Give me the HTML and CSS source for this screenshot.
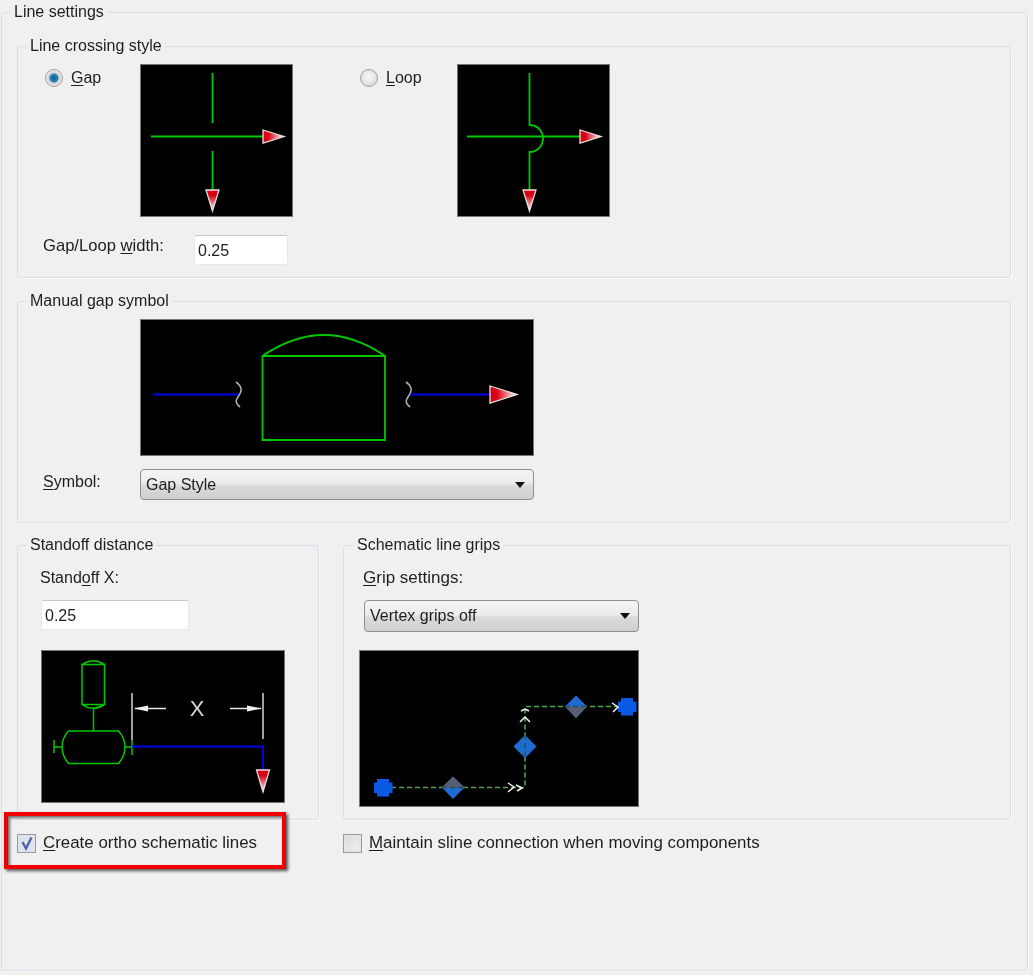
FILE: index.html
```html
<!DOCTYPE html>
<html lang="en">
<head>
    <meta charset="UTF-8">
    <title>Line settings</title>
    <link rel="stylesheet" href="styles.css">
</head>
<body>
    <fieldset class="group outer">
        <legend>Line settings</legend>

        <fieldset class="group crossing">
            <legend>Line crossing style</legend>
            <div class="crossing-row">
                <div class="option option-gap">
                    <span class="radio radio-on"></span>
                    <span class="option-label"><u>G</u>ap</span>
                </div>
                <svg class="preview" width="153" height="153" viewBox="0 0 153 153">
                    <defs>
                        <linearGradient id="headRight" x1="0" y1="0" x2="1" y2="0">
                            <stop offset="0.25" stop-color="#d80012"/>
                            <stop offset="1" stop-color="#ffffff"/>
                        </linearGradient>
                        <linearGradient id="headDown" x1="0" y1="0" x2="0" y2="1">
                            <stop offset="0.25" stop-color="#d80012"/>
                            <stop offset="1" stop-color="#ffffff"/>
                        </linearGradient>
                    </defs>
                    <path class="pipe" d="M72.5 9V59M72.5 87V126M11 72.5H123"/>
                    <polygon class="head-r" points="123,66 144,72.5 123,79"/>
                    <polygon class="head-d" points="66,126 79,126 72.5,147"/>
                </svg>
                <div class="option option-loop">
                    <span class="radio"></span>
                    <span class="option-label"><u>L</u>oop</span>
                </div>
                <svg class="preview" width="153" height="153" viewBox="0 0 153 153">
                    <path class="pipe" d="M72.5 9V61A13.5 13.5 0 0 1 72.5 88V126M10 72.5H123"/>
                    <polygon class="head-r" points="123,66 144,72.5 123,79"/>
                    <polygon class="head-d" points="66,126 79,126 72.5,147"/>
                </svg>
            </div>
            <div class="width-row">
                <label class="width-label">Gap/Loop <u>w</u>idth:</label>
                <input class="field width-field" type="text" value="0.25">
            </div>
        </fieldset>

        <fieldset class="group manual">
            <legend>Manual gap symbol</legend>
            <svg class="preview" width="394" height="137" viewBox="0 0 394 137">
                <path class="pipe" d="M122.5 37H245V121H122.5ZM122.5 37Q184 -5 245 37"/>
                <path class="blue" d="M13 75.5H99M270 75.5H350"/>
                <path class="squiggle" d="M96 63C103 68 102 73 98 78C95 82 96 85 100 88M266 63C273 68 272 73 268 78C265 82 266 85 270 88"/>
                <polygon class="head-r" points="350,67 377,75.5 350,84"/>
            </svg>
            <div class="symbol-row">
                <label class="symbol-label"><u>S</u>ymbol:</label>
                <div class="combo symbol-combo">Gap Style<span class="combo-arrow"></span></div>
            </div>
        </fieldset>

        <div class="bottom-groups">
            <fieldset class="group standoff">
                <legend>Standoff distance</legend>
                <label class="stack-label">Stand<u>o</u>ff X:</label>
                <input class="field standoff-field" type="text" value="0.25">
                <svg class="preview" width="244" height="153" viewBox="0 0 244 153">
                    <path class="thin" d="M41 14.500H63.500V54.500H41ZM41 14.500Q52 7 63.500 14.500M41 54.500Q52 62 63.500 54.500M52.500 58V81"/>
                    <path class="thin" d="M27.500 81H77.500Q84 88 84 97Q84 106 77.500 113.500H27.500Q21 106 21 97Q21 88 27.500 81ZM21 97H13M13 90V103M84 97H91M91 90V105"/>
                    <path class="dim" d="M91 43V90M222 43V89"/>
                    <path class="dim-thin" d="M94 58.500H125M189 58.500H220"/>
                    <polygon class="dim-head" points="93,58.500 107,55.500 107,61.500"/>
                    <polygon class="dim-head" points="220,58.500 206,55.500 206,61.500"/>
                    <text class="dim-text" x="156" y="66">X</text>
                    <path class="blue" d="M91 96.500H222V120"/>
                    <polygon class="head-d" points="215.500,120 228.500,120 222,142"/>
                </svg>
            </fieldset>
            <fieldset class="group grips">
                <legend>Schematic line grips</legend>
                <label class="stack-label"><u>G</u>rip settings:</label>
                <div class="combo grip-combo">Vertex grips off<span class="combo-arrow"></span></div>
                <svg class="preview" width="280" height="157" viewBox="0 0 280 157">
                    <path class="dashes" d="M24 137.500H166V56.500H268"/>
                    <path class="grip-plus" d="M18 129H30V132.500H33.500V143H30V146.500H18V143H15V132.500H18Z"/>
                    <path class="grip-plus" d="M262 48H274V51.500H277.500V62H274V65.500H262V62H259V51.500H262Z"/>
                    <polygon class="grip-vertex" points="94,126.500 105.500,137.500 94,149 83,137.500"/>
                    <polygon class="grip-vertex" points="166,85 177.500,96.500 166,108 154.500,96.500"/>
                    <polygon class="grip-vertex" points="217,45.500 228,56.500 217,68 206,56.500"/>
                    <polygon class="grip-shade" points="94,126.500 105.500,137.500 83,137.500"/>
                    <polygon class="grip-shade" points="217,68 228,56.500 206,56.500"/>
                    <path class="dashes-over" d="M83 137.500H105M166 85V108M206 56.500H228"/>
                    <path class="grip-mark" d="M149 133L155 137L149 142M157 135L163 138L158 141"/>
                    <path class="grip-mark" d="M162 61L166 59L170 61M161 72L166 67L171 72"/>
                    <path class="grip-mark" d="M253 53L259 57L254 62"/>
                </svg>
            </fieldset>
        </div>

        <div class="check-row">
            <div class="check-item first-check">
                <span class="checkbox checkbox-on">
                    <svg width="17" height="17" viewBox="0 0 17 17"><path class="tick" d="M4.500 7L8 13.500L13.500 2.500"/></svg>
                </span>
                <span><u>C</u>reate ortho schematic lines</span>
                <div class="highlight"></div>
            </div>
            <div class="check-item">
                <span class="checkbox"></span>
                <span><u>M</u>aintain sline connection when moving components</span>
            </div>
        </div>
    </fieldset>
</body>
</html>
```

FILE: styles.css
```css
html, body {
    margin: 0;
    background: #f0f0f0;
}
body {
    width: 1033px;
    height: 975px;
    overflow: hidden;
    font-family: "Liberation Sans", Arial, sans-serif;
    font-size: 16px;
    line-height: 18px;
    color: #1e1e1e;
    filter: blur(0.55px);
}
u {
    text-underline-offset: 2px;
}

/* group boxes */
.group {
    margin: 0;
    min-width: 0;
    border: 1px solid #d6e0ea;
    border-radius: 3px;
    box-shadow: 1px 1px 0 #fbfbfb;
}
.group legend {
    padding: 0 3px;
    background: #f0f0f0;
}
.outer {
    width: 1027px;
    height: 968px;
    box-sizing: border-box;
    margin: 3px 0 0 1px;
    padding: 16px 16px 0 15px;
}
.outer > legend {
    margin-left: -6px;
}
.crossing {
    padding: 9px 0 12px 25px;
}
.crossing > legend {
    margin-left: -16px;
}
.manual {
    margin-top: 14px;
    padding: 9px 0 22px 122px;
}
.manual > legend {
    margin-left: -113px;
}
.bottom-groups {
    display: flex;
    gap: 24px;
    margin-top: 13px;
}
.standoff {
    width: 302px;
    box-sizing: border-box;
    padding: 15px 0 16px 23px;
}
.standoff > legend {
    margin-left: -14px;
}
.grips {
    flex: 1;
    padding: 15px 0 12px 15px;
}
.grips > legend {
    margin-left: -5px;
}

/* previews */
.preview {
    display: block;
    flex: none;
    background: #000;
    outline: 1px solid #777;
    outline-offset: -1px;
}
.pipe, .thin, .blue, .squiggle, .dim, .dim-thin, .dashes, .dashes-over, .tick, .grip-mark {
    fill: none;
}
.pipe {
    stroke: #00c800;
    stroke-width: 1.800;
}
.thin {
    stroke: #00c800;
    stroke-width: 1.500;
}
.blue {
    stroke: #0000f0;
    stroke-width: 1.800;
}
.squiggle {
    stroke: #b0b0b0;
    stroke-width: 1.600;
}
.head-r {
    fill: url(#headRight);
    stroke: #e8e0e0;
    stroke-width: 1.300;
}
.head-d {
    fill: url(#headDown);
    stroke: #e8e0e0;
    stroke-width: 1.300;
}
.dim {
    stroke: #c8c8c8;
    stroke-width: 1.600;
}
.dim-thin {
    stroke: #e8e8e8;
    stroke-width: 1.500;
}
.dim-head {
    fill: #f0f0f0;
}
.dim-text {
    fill: #d8d8d8;
    font-size: 22px;
    text-anchor: middle;
}
.dashes {
    stroke: #46a846;
    stroke-width: 1.600;
    stroke-dasharray: 5 3;
}
.dashes-over {
    stroke: #2c4a50;
    stroke-width: 1.300;
    stroke-dasharray: 5 3;
}
.grip-plus {
    fill: #0a5ae6;
}
.grip-vertex {
    fill: #1f6cd0;
}
.grip-shade {
    fill: #566072;
}
.grip-mark {
    stroke: #f4f4f4;
    stroke-width: 1.500;
}

/* line crossing row */
.crossing-row {
    display: flex;
    margin-left: 2px;
}
.option {
    display: flex;
    align-items: flex-start;
    gap: 8px;
    margin-top: 5px;
}
.option-gap {
    width: 95px;
}
.option-loop {
    width: 97px;
    margin-left: 67px;
}
.radio {
    width: 16px;
    height: 16px;
    flex: none;
    border: 1px solid #a0a0a0;
    border-radius: 50%;
    background: radial-gradient(circle at 50% 40%, #fbfbfb, #cfcfcf);
}
.radio-on {
    background: radial-gradient(circle, #14608f 0, #2a86bd 4px, #cfcfcf 5px, #eeeeee 8px);
}
.width-row {
    display: flex;
    margin-top: 18px;
}
.width-label {
    width: 151px;
    margin-top: 2px;
    font-size: 16.600px;
}
.field {
    box-sizing: border-box;
    height: 30px;
    padding: 1px 3px 0;
    border: 1px solid #e4e9ee;
    border-top-color: #c3c6cc;
    border-radius: 2px;
    background: #fff;
    font: inherit;
    color: inherit;
}
.width-field {
    width: 94px;
}
.standoff-field {
    display: block;
    width: 148px;
    margin: 13px 0 20px;
}

/* combos */
.combo {
    position: relative;
    box-sizing: border-box;
    height: 31px;
    padding: 6px 5px;
    border: 1px solid #8f8f8f;
    border-radius: 4px;
    background: linear-gradient(#f4f4f4 0, #ececec 45%, #dadada 55%, #cfcfcf 100%);
}
.combo-arrow {
    position: absolute;
    top: 12px;
    right: 8px;
    border-top: 6px solid #111;
    border-left: 5.500px solid transparent;
    border-right: 5.500px solid transparent;
}
.symbol-row {
    display: flex;
    margin: 13px 0 0 -97px;
}
.symbol-label {
    width: 97px;
    margin-top: 4px;
}
.symbol-combo {
    width: 394px;
}
.stack-label {
    display: block;
}
.grip-combo {
    width: 275px;
    height: 32px;
    margin: 13px 0 18px 5px;
}
.grips .stack-label {
    margin-left: 4px;
    font-size: 17px;
}
.standoff .stack-label {
    margin-left: -1px;
}

/* checkboxes */
.check-row {
    display: flex;
    margin-top: 13px;
    font-size: 16.900px;
}
.check-item {
    position: relative;
    display: flex;
    align-items: center;
    gap: 7px;
    height: 20px;
}
.first-check {
    width: 326px;
}
.checkbox {
    box-sizing: border-box;
    width: 19px;
    height: 19px;
    flex: none;
    border: 1px solid #9a9a9a;
    background: linear-gradient(135deg, #d8d8d8, #f4f4f4);
    box-shadow: inset 0 0 0 2px #e4e4e4;
}
.checkbox svg {
    display: block;
}
.checkbox-on {
    background: #dfe3ee;
    box-shadow: none;
}
.tick {
    stroke: #4f63ac;
    stroke-width: 2.400;
}
.highlight {
    position: absolute;
    top: -21px;
    left: -13px;
    width: 282px;
    height: 57px;
    box-sizing: border-box;
    border: 4px solid #f00000;
    box-shadow: 2px 2px 3px rgba(0, 0, 0, 0.65), inset 2px 2px 3px rgba(0, 0, 0, 0.55);
}
```
